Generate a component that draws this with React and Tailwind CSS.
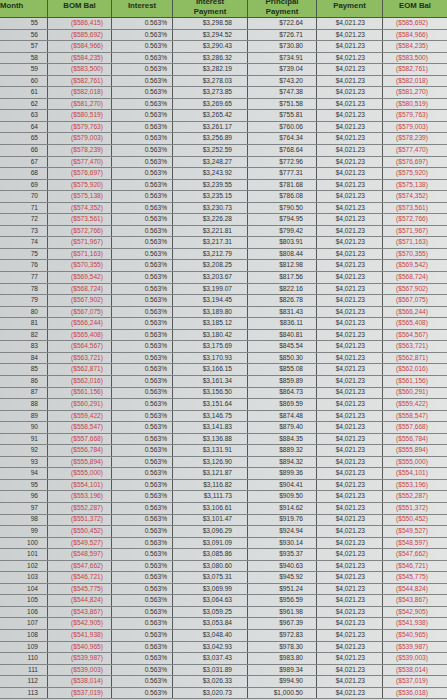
const rate = 0.005625;
const payment = 4021.2298;

function buildRows() {
  const rows = [];
  let bal = 586415.09;
  for (let m = 55; m <= 113; m++) {
    const interest = bal * rate;
    const principal = payment - interest;
    const eom = bal - principal;
    rows.push({ m, bom: bal, interest, principal, eom });
    bal = eom;
  }
  return rows;
}

const money = (v) =>
  "$" + v.toLocaleString("en-US", { minimumFractionDigits: 2, maximumFractionDigits: 2 });
const neg = (v) => "($" + Math.round(v).toLocaleString("en-US") + ")";

const cols = [
  { key: "month", w: "w-[48px]", head: ["Month"], align: "justify-start" },
  { key: "bom", w: "w-[64px]", head: ["BOM Bal"] },
  { key: "int", w: "w-[61px]", head: ["Interest"] },
  { key: "ip", w: "w-[75px]", head: ["Interest", "Payment"] },
  { key: "pp", w: "w-[69px]", head: ["Principal", "Payment"] },
  { key: "pay", w: "w-[66px]", head: ["Payment"] },
  { key: "eom", w: "w-[64px]", head: ["EOM Bal"] },
];

function HeaderRow() {
  return (
    <div className="flex h-[18px] overflow-hidden bg-[#8dbd60] border-b border-[#4d5a40]">
      {cols.map((c, i) => (
        <div
          key={c.key}
          className={`${c.w} shrink-0 flex items-center ${c.align || "justify-center"} ${
            i < cols.length - 1 ? "border-r border-[#4f5a48]" : ""
          }`}
        >
          <span
            className={`${
              c.head.length > 1 ? "-mt-[4px]" : "-mt-[6px]"
            } text-center text-[7.8px] leading-[10px] font-bold text-[#22301c]`}
          >
            {c.head.map((h, j) => (
              <span key={j} className="block">
                {h}
              </span>
            ))}
          </span>
        </div>
      ))}
    </div>
  );
}

function Row({ r }) {
  const cell = "shrink-0 flex items-center justify-end border-r border-[#53585a]";
  return (
    <div className="flex h-[11.55px] border-b border-[#7f8485] text-[6.6px] leading-none text-[#2e3234]">
      <div className={`${cell} w-[48px] pr-[9px]`}>{r.m}</div>
      <div className={`${cell} w-[64px] pr-[8px] text-[#c63f49]`}>{neg(r.bom)}</div>
      <div className={`${cell} w-[61px] pr-[5px]`}>0.563%</div>
      <div className={`${cell} w-[75px] pr-[15px]`}>{money(r.interest)}</div>
      <div className={`${cell} w-[69px] pr-[13px]`}>{money(r.principal)}</div>
      <div className={`${cell} w-[66px] pr-[17px]`}>{money(payment)}</div>
      <div className="shrink-0 flex items-center justify-end w-[64px] pr-[19px] text-[#c63f49]">
        {neg(r.eom)}
      </div>
    </div>
  );
}

export default function App() {
  const rows = buildRows();
  return (
    <div
      className="w-[447px] h-[700px] overflow-hidden bg-gradient-to-r from-[#cdd0d1] via-[#d8dbdb] to-[#e2e4e4]"
      style={{ fontFamily: '"Liberation Sans", Arial, sans-serif' }}
    >
      <HeaderRow />
      {rows.map((r) => (
        <Row key={r.m} r={r} />
      ))}
    </div>
  );
}
